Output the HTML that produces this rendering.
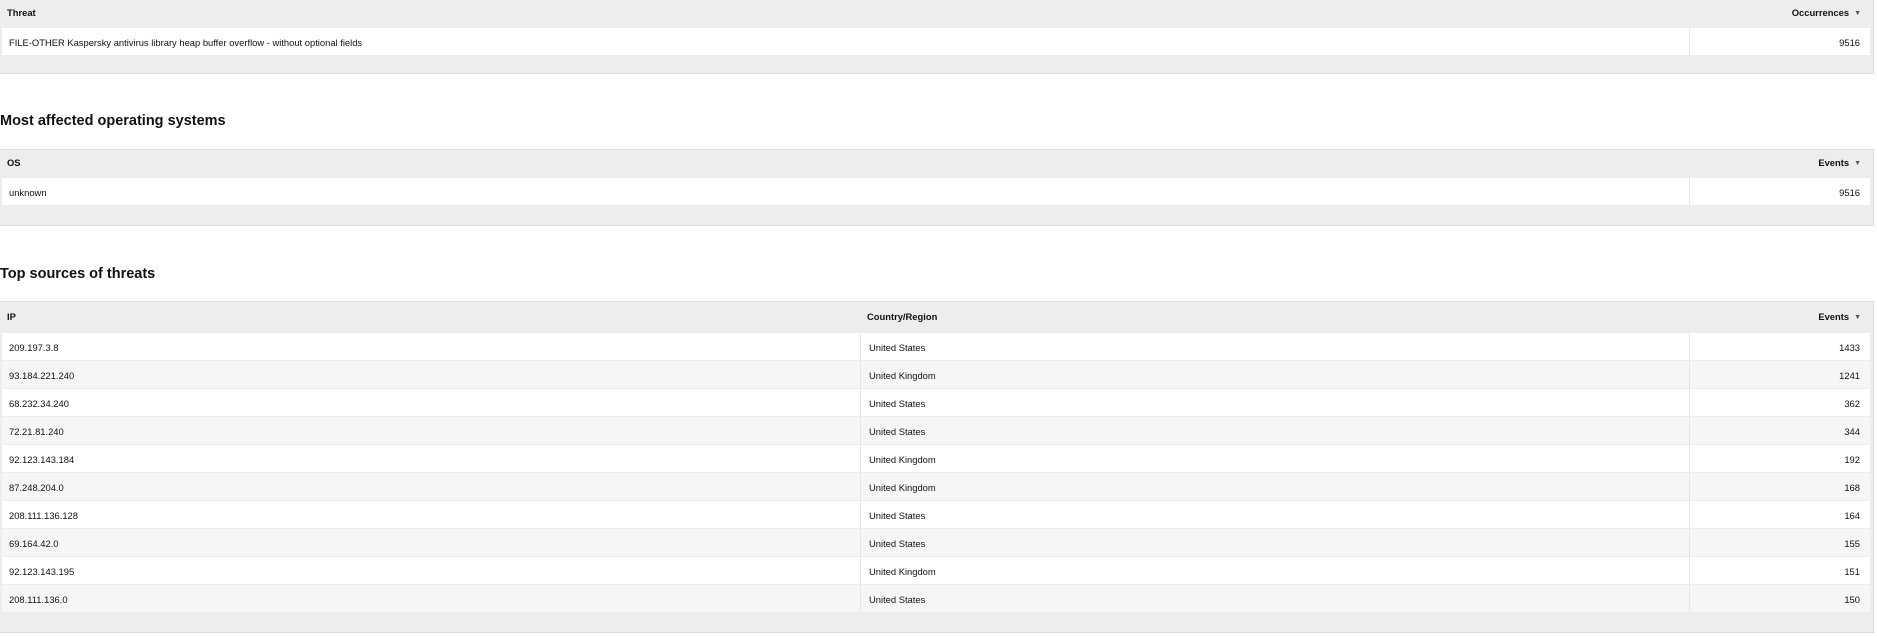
<!DOCTYPE html>
<html><head><meta charset="utf-8"><style>
*{margin:0;padding:0;box-sizing:border-box}
body{width:1877px;height:636px;background:#fff;font-family:"Liberation Sans",sans-serif;font-size:9.4px;color:#111;position:relative;overflow:hidden}
.t{position:absolute;left:0;width:1874px;background:#ededed;border:1px solid #dcdcdc;border-left:none}
.hd{height:28px;display:flex;align-items:center;font-weight:bold;position:relative;padding-bottom:3px}
.r{height:27px;margin:0 3px 1px 2px;display:flex;align-items:center;background:#fff;position:relative;padding-top:1px}
.r.a{background:#f6f6f6}
.c1{position:absolute;left:7px}
.c2{position:absolute;left:867px}
.cr{position:absolute;right:10px}
.hd .cr{right:12px}
.dv{position:absolute;top:0;bottom:0;width:1px;background:#e6e6e6}
.ar{font-size:7px;color:#555;margin-left:5px;vertical-align:1px}
h2{position:absolute;left:0;font-size:14.5px;font-weight:bold;color:#111}
</style></head><body>
<div class="t" style="top:-1px;height:75px">
 <div class="hd"><span class="c1">Threat</span><span class="cr">Occurrences<span class="ar">▼</span></span></div>
 <div class="r"><span class="c1">FILE-OTHER Kaspersky antivirus library heap buffer overflow - without optional fields</span><div class="dv" style="left:1687px"></div><span class="cr">9516</span></div>
</div>
<h2 style="top:113px">Most affected operating systems</h2>
<div class="t" style="top:149px;height:77px">
 <div class="hd"><span class="c1">OS</span><span class="cr">Events<span class="ar">▼</span></span></div>
 <div class="r"><span class="c1">unknown</span><div class="dv" style="left:1687px"></div><span class="cr">9516</span></div>
</div>
<h2 style="top:266px">Top sources of threats</h2>
<div class="t" style="top:301px;height:332px">
 <div class="hd" style="height:31px"><span class="c1">IP</span><span class="c2">Country/Region</span><span class="cr">Events<span class="ar">▼</span></span></div>
 <div class="r"><span class="c1">209.197.3.8</span><div class="dv" style="left:858px"></div><span class="c2">United States</span><div class="dv" style="left:1687px"></div><span class="cr">1433</span></div>
 <div class="r a"><span class="c1">93.184.221.240</span><div class="dv" style="left:858px"></div><span class="c2">United Kingdom</span><div class="dv" style="left:1687px"></div><span class="cr">1241</span></div>
 <div class="r"><span class="c1">68.232.34.240</span><div class="dv" style="left:858px"></div><span class="c2">United States</span><div class="dv" style="left:1687px"></div><span class="cr">362</span></div>
 <div class="r a"><span class="c1">72.21.81.240</span><div class="dv" style="left:858px"></div><span class="c2">United States</span><div class="dv" style="left:1687px"></div><span class="cr">344</span></div>
 <div class="r"><span class="c1">92.123.143.184</span><div class="dv" style="left:858px"></div><span class="c2">United Kingdom</span><div class="dv" style="left:1687px"></div><span class="cr">192</span></div>
 <div class="r a"><span class="c1">87.248.204.0</span><div class="dv" style="left:858px"></div><span class="c2">United Kingdom</span><div class="dv" style="left:1687px"></div><span class="cr">168</span></div>
 <div class="r"><span class="c1">208.111.136.128</span><div class="dv" style="left:858px"></div><span class="c2">United States</span><div class="dv" style="left:1687px"></div><span class="cr">164</span></div>
 <div class="r a"><span class="c1">69.164.42.0</span><div class="dv" style="left:858px"></div><span class="c2">United States</span><div class="dv" style="left:1687px"></div><span class="cr">155</span></div>
 <div class="r"><span class="c1">92.123.143.195</span><div class="dv" style="left:858px"></div><span class="c2">United Kingdom</span><div class="dv" style="left:1687px"></div><span class="cr">151</span></div>
 <div class="r a"><span class="c1">208.111.136.0</span><div class="dv" style="left:858px"></div><span class="c2">United States</span><div class="dv" style="left:1687px"></div><span class="cr">150</span></div>
</div>
</body></html>
